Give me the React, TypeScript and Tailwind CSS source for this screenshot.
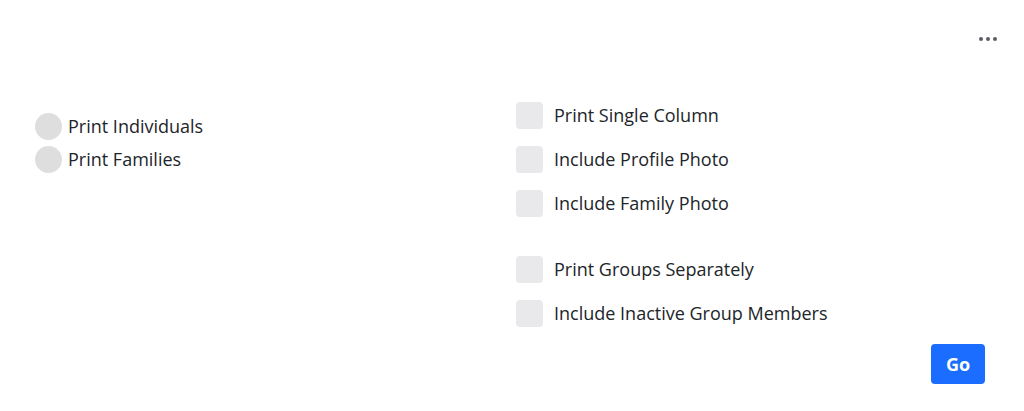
import { useState } from "react";

const radios = ["Print Individuals", "Print Families"];

const checkGroups = [
  ["Print Single Column", "Include Profile Photo", "Include Family Photo"],
  ["Print Groups Separately", "Include Inactive Group Members"],
];

export default function App() {
  const [mode, setMode] = useState<string | null>(null);
  const [checked, setChecked] = useState<Record<string, boolean>>({});

  return (
    <div
      className="relative w-[1024px] h-[411px] bg-white text-[#212529] text-[18px]"
      style={{ fontFamily: '"Open Sans", sans-serif' }}
    >
      {/* Menu */}
      <button className="absolute right-[27px] top-[37px] flex gap-[3px] p-0">
        <span className="h-[4px] w-[4px] rounded-full bg-[#5a5f66]" />
        <span className="h-[4px] w-[4px] rounded-full bg-[#5a5f66]" />
        <span className="h-[4px] w-[4px] rounded-full bg-[#5a5f66]" />
      </button>

      <div className="flex pt-[102px]">
        {/* Radios */}
        <div className="w-[516px] pl-[35px] pt-[11px] flex flex-col gap-[6px]">
          {radios.map((r) => (
            <label key={r} className="flex items-center gap-[6px] cursor-pointer">
              <span
                onClick={() => setMode(r)}
                className="h-[27px] w-[27px] rounded-full bg-[#dedede] flex items-center justify-center"
              >
                {mode === r && <span className="h-[10px] w-[10px] rounded-full bg-white" />}
              </span>
              <span className="leading-[27px]">{r}</span>
            </label>
          ))}
        </div>

        {/* Checkboxes */}
        <div className="flex flex-col gap-[39px]">
          {checkGroups.map((group, i) => (
            <div key={i} className="flex flex-col gap-[17px]">
              {group.map((c) => (
                <label key={c} className="flex items-center gap-[11px] cursor-pointer">
                  <span
                    onClick={() => setChecked({ ...checked, [c]: !checked[c] })}
                    className={
                      "h-[27px] w-[27px] rounded-[4px] " +
                      (checked[c] ? "bg-[#1a6dff]" : "bg-[#e9e9ec]")
                    }
                  />
                  <span className="leading-[27px]">{c}</span>
                </label>
              ))}
            </div>
          ))}
        </div>
      </div>

      <div className="absolute right-[39px] top-[344px]">
        <button className="h-[40px] w-[54px] rounded-[4px] bg-[#1a6dff] text-white font-bold text-[18px]">
          Go
        </button>
      </div>
    </div>
  );
}
